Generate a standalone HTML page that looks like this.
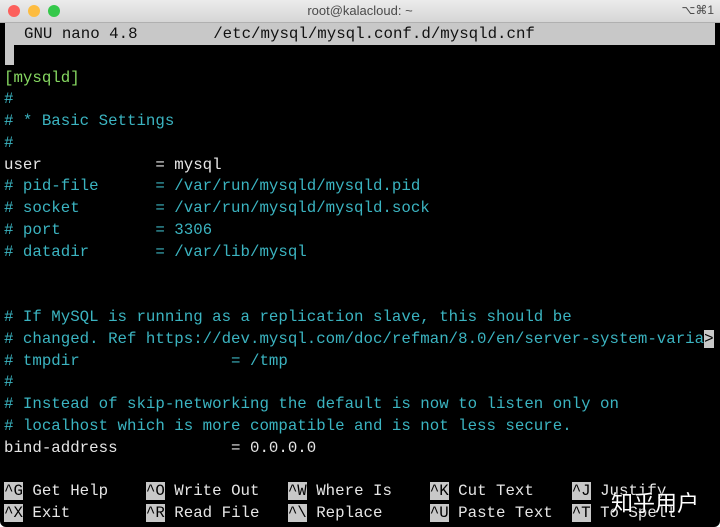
<!DOCTYPE html>
<html><head><meta charset="utf-8"><style>
html,body{margin:0;padding:0;background:#fff;}
#w{position:relative;width:720px;height:527px;background:#000;overflow:hidden;border-radius:0 0 6px 6px;}
#tb{position:absolute;left:0;top:0;width:720px;height:22px;background:linear-gradient(#ececec,#d6d6d6);border-bottom:1px solid #b0b0b0;font:13px "Liberation Sans",sans-serif;color:#4a4a4a;}
.dot{position:absolute;top:5px;width:12px;height:12px;border-radius:50%;}
.l{position:absolute;left:4px;height:22px;line-height:22px;font-family:"Liberation Mono",monospace;font-size:15.77px;white-space:pre;color:#e6e6e6;}
.c{color:#3bb4c1;}
.g{color:#86d861;}
.k{background:#c8c8c8;color:#000;}
</style></head><body><div id="w">
<div id="tb">
<div class="dot" style="left:8px;background:#fc605c"></div>
<div class="dot" style="left:28px;background:#fdbc40"></div>
<div class="dot" style="left:48px;background:#34c84a"></div>
<div style="position:absolute;left:0;width:720px;top:3px;text-align:center">root@kalacloud: ~</div>
<div style="position:absolute;right:6px;top:3px;font-size:12px">⌥⌘1</div>
</div>
<div style="position:absolute;left:5px;top:23px;width:710px;height:22px;background:#c8c8c8"></div>
<div style="position:absolute;left:5px;top:45px;width:9px;height:20px;background:#c8c8c8"></div>
<div class="l" style="top:23px;left:24px;color:#111">GNU nano 4.8        /etc/mysql/mysql.conf.d/mysqld.cnf</div>
<div class="l g" style="top:66.5px">[mysqld]</div>
<div class="l c" style="top:88.3px">#</div>
<div class="l c" style="top:110px"># * Basic Settings</div>
<div class="l c" style="top:131.8px">#</div>
<div class="l" style="top:153.6px">user            = mysql</div>
<div class="l c" style="top:175.4px"># pid-file      = /var/run/mysqld/mysqld.pid</div>
<div class="l c" style="top:197.2px"># socket        = /var/run/mysqld/mysqld.sock</div>
<div class="l c" style="top:218.9px"># port          = 3306</div>
<div class="l c" style="top:240.7px"># datadir       = /var/lib/mysql</div>
<div class="l c" style="top:306px"># If MySQL is running as a replication slave, this should be</div>
<div class="l c" style="top:327.8px"># changed. Ref https://dev.mysql.com/doc/refman/8.0/en/server-system-varia<span class="k">&gt;</span></div>
<div class="l c" style="top:349.6px"># tmpdir                = /tmp</div>
<div class="l c" style="top:371.3px">#</div>
<div class="l c" style="top:393.1px"># Instead of skip-networking the default is now to listen only on</div>
<div class="l c" style="top:414.9px"># localhost which is more compatible and is not less secure.</div>
<div class="l" style="top:436.7px">bind-address            = 0.0.0.0</div>
<div class="l" style="top:480.2px"><span class="k">^G</span> Get Help    <span class="k">^O</span> Write Out   <span class="k">^W</span> Where Is    <span class="k">^K</span> Cut Text    <span class="k">^J</span> Justify</div>
<div class="l" style="top:502px"><span class="k">^X</span> Exit        <span class="k">^R</span> Read File   <span class="k">^\</span> Replace     <span class="k">^U</span> Paste Text  <span class="k">^T</span> To Spell</div>
<div style="position:absolute;left:611px;top:486px;font:22px 'Noto Sans CJK SC',sans-serif;color:#fff;text-shadow:0 0 2px #000">知乎用户</div>
</div></body></html>
